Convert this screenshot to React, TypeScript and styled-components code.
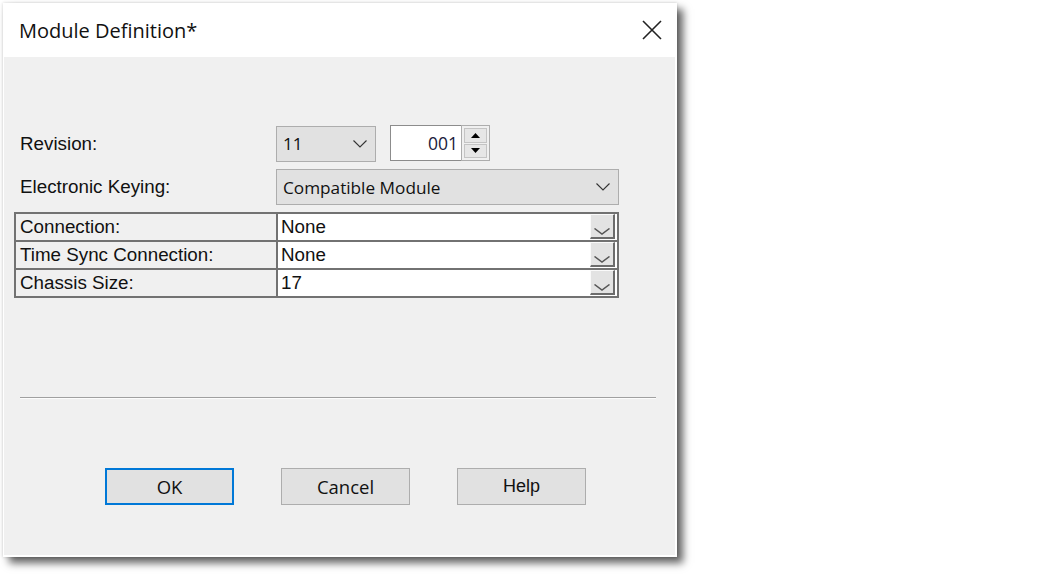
import React from "react";
import styled, { createGlobalStyle } from "styled-components";

const GlobalStyle = createGlobalStyle`
  html, body { margin: 0; padding: 0; background: #ffffff; }
  * { box-sizing: border-box; }
`;

const SEGOE = `"Open Sans", "Noto Sans", sans-serif`;
const MSSANS = `"Liberation Sans", Arial, sans-serif`;

const Page = styled.div`
  padding: 3px 0 0 3px;
  width: 1042px;
  height: 574px;
`;

const Window = styled.div`
  width: 674px;
  height: 554px;
  background: #f0f0f0;
  border-top: 1px solid #ffffff;
  border-left: 1px solid #ffffff;
  border-right: 2px solid #ffffff;
  border-bottom: 2px solid #ffffff;
  box-shadow: 0 0 3px rgba(0, 0, 0, 0.18), 6px 6px 8px rgba(0, 0, 0, 0.62);
  display: flex;
  flex-direction: column;
`;

const TitleBar = styled.div`
  height: 53px;
  background: #ffffff;
  display: flex;
  align-items: center;
  justify-content: space-between;
  padding: 0 12px 0 15px;
  flex-shrink: 0;
`;

const Title = styled.div`
  font-family: ${SEGOE};
  font-size: 20px;
  color: #111;
`;

const CloseButton = styled.div`
  width: 22px;
  height: 22px;
  display: flex;
  align-items: center;
  justify-content: center;
  margin-top: -2px;
`;

const Body = styled.div`
  flex: 1;
  padding: 68px 0 0 10px;
  display: flex;
  flex-direction: column;
`;

const FieldRow = styled.div<{ $h: number; $mt?: number }>`
  display: grid;
  grid-template-columns: 262px auto;
  align-items: center;
  height: ${(p) => p.$h}px;
  margin-top: ${(p) => p.$mt ?? 0}px;
`;

const Label = styled.div`
  font-family: ${MSSANS};
  font-size: 18.8px;
  color: #111;
  padding-left: 6px;
`;

const Controls = styled.div`
  display: flex;
  align-items: center;
  gap: 14px;
`;

const Combo = styled.div<{ $w: number }>`
  width: ${(p) => p.$w}px;
  height: 36px;
  background: #e1e1e1;
  border: 1px solid #adadad;
  display: flex;
  align-items: center;
  justify-content: space-between;
  padding: 0 8px 0 6px;
  font-family: ${SEGOE};
  font-size: 17.2px;
  color: #111;
`;

const SpinBox = styled.div`
  display: flex;
  height: 36px;
  width: 100px;
  margin-top: -1px;
`;

const SpinInput = styled.div`
  width: 71px;
  background: #ffffff;
  border: 1px solid #8c8c8c;
  border-right: none;
  display: flex;
  align-items: center;
  justify-content: flex-end;
  padding-right: 3px;
  font-family: ${SEGOE};
  font-size: 17.5px;
  color: #1a1a3a;
`;

const SpinButtons = styled.div`
  width: 29px;
  border: 1px solid #adadad;
  background: #f0f0f0;
  display: flex;
  flex-direction: column;
  padding: 2px;
  gap: 1px;
`;

const SpinArrow = styled.div`
  flex: 1;
  background: #e6e6e6;
  border: 1px solid #c4c4c4;
  display: flex;
  align-items: center;
  justify-content: center;
`;

const Grid = styled.div`
  margin-top: 7px;
  width: 605px;
  display: grid;
  grid-template-columns: 260px 1fr;
  grid-auto-rows: 26px;
  gap: 2px;
  padding: 2px;
  background: #727272;
`;

const GridLabel = styled.div`
  background: #f0f0f0;
  font-family: ${MSSANS};
  font-size: 18.8px;
  color: #111;
  padding-left: 4px;
  display: flex;
  align-items: center;
`;

const GridValue = styled.div`
  background: #ffffff;
  font-family: ${MSSANS};
  font-size: 18.8px;
  color: #111;
  padding-left: 3px;
  padding-right: 2px;
  display: flex;
  align-items: center;
  justify-content: space-between;
`;

const DropButton = styled.div`
  width: 25px;
  height: 25px;
  align-self: flex-start;
  background: #e3e3e3;
  border-top: 1px solid #fafafa;
  border-left: 1px solid #fafafa;
  border-right: 2px solid #6c6c6c;
  border-bottom: 2px solid #6c6c6c;
  display: flex;
  align-items: flex-end;
  justify-content: center;
  padding-bottom: 2px;
`;

const Separator = styled.div`
  margin: 99px 19px 0 6px;
  height: 2px;
  border-top: 1px solid #a0a0a0;
  border-bottom: 1px solid #fcfcfc;
`;

const ButtonBar = styled.div`
  display: flex;
  gap: 47px;
  margin: 69px 0 0 91px;
`;

const DialogButton = styled.div<{ $default?: boolean; $font: "segoe" | "ms" }>`
  width: 129px;
  height: 37px;
  background: #e1e1e1;
  border: ${(p) => (p.$default ? "2px solid #0078d7" : "1px solid #adadad")};
  display: flex;
  align-items: center;
  justify-content: center;
  font-family: ${(p) => (p.$font === "segoe" ? SEGOE : MSSANS)};
  font-size: ${(p) => (p.$font === "segoe" ? "18.5px" : "18px")};
  color: #111;
`;

const Chevron = ({ w = 14, h = 7, sw = 1.1, color = "#333" }: { w?: number; h?: number; sw?: number; color?: string }) => (
  <svg width={w} height={h + 1} viewBox={`0 0 ${w} ${h + 1}`}>
    <polyline points={`0.5,0.5 ${w / 2},${h} ${w - 0.5},0.5`} fill="none" stroke={color} strokeWidth={sw} />
  </svg>
);

const Triangle = ({ up }: { up?: boolean }) => (
  <svg width="9" height="5" viewBox="0 0 9 5">
    <polygon points={up ? "0,5 9,5 4.5,0" : "0,0 9,0 4.5,5"} fill="#000" />
  </svg>
);

const rows = [
  { label: "Connection:", value: "None" },
  { label: "Time Sync Connection:", value: "None" },
  { label: "Chassis Size:", value: "17" },
];

export default function App() {
  return (
    <>
      <GlobalStyle />
      <Page>
        <Window>
          <TitleBar>
            <Title>Module Definition*</Title>
            <CloseButton>
              <svg width="20" height="20" viewBox="0 0 20 20">
                <path d="M1 1 L19 19 M19 1 L1 19" stroke="#222" strokeWidth="1.6" fill="none" />
              </svg>
            </CloseButton>
          </TitleBar>
          <Body>
            <FieldRow $h={37}>
              <Label>Revision:</Label>
              <Controls>
                <Combo $w={100}>
                  <span>11</span>
                  <Chevron />
                </Combo>
                <SpinBox>
                  <SpinInput>001</SpinInput>
                  <SpinButtons>
                    <SpinArrow>
                      <Triangle up />
                    </SpinArrow>
                    <SpinArrow>
                      <Triangle />
                    </SpinArrow>
                  </SpinButtons>
                </SpinBox>
              </Controls>
            </FieldRow>
            <FieldRow $h={36} $mt={7}>
              <Label>Electronic Keying:</Label>
              <Combo $w={343}>
                <span>Compatible Module</span>
                <Chevron />
              </Combo>
            </FieldRow>
            <Grid>
              {rows.map((r) => (
                <React.Fragment key={r.label}>
                  <GridLabel>{r.label}</GridLabel>
                  <GridValue>
                    <span>{r.value}</span>
                    <DropButton>
                      <Chevron w={16} h={6} sw={1.5} color="#555" />
                    </DropButton>
                  </GridValue>
                </React.Fragment>
              ))}
            </Grid>
            <Separator />
            <ButtonBar>
              <DialogButton $default $font="segoe">OK</DialogButton>
              <DialogButton $font="segoe">Cancel</DialogButton>
              <DialogButton $font="ms">Help</DialogButton>
            </ButtonBar>
          </Body>
        </Window>
      </Page>
    </>
  );
}
